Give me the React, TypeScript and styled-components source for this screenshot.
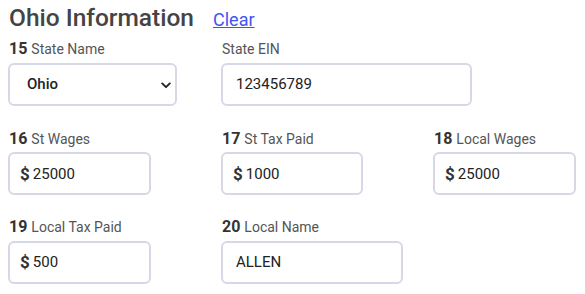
import { createGlobalStyle, styled } from "styled-components";

const GlobalStyle = createGlobalStyle`
	* {
		box-sizing: border-box;
	}
	body {
		margin: 0;
		background: #ffffff;
		font-family: Roboto, "Liberation Sans", Arial, sans-serif;
	}
`;

interface fieldType {
	num?: number;
	label: string;
	value: string;
	width: number;
	money?: boolean;
	select?: boolean;
}

const rows: fieldType[][] = [
	[
		{ num: 15, label: "State Name", value: "Ohio", width: 169, select: true },
		{ label: "State EIN", value: "123456789", width: 251 },
	],
	[
		{ num: 16, label: "St Wages", value: "25000", width: 143, money: true },
		{ num: 17, label: "St Tax Paid", value: "1000", width: 142, money: true },
		{ num: 18, label: "Local Wages", value: "25000", width: 143, money: true },
	],
	[
		{ num: 19, label: "Local Tax Paid", value: "500", width: 143, money: true },
		{ num: 20, label: "Local Name", value: "ALLEN", width: 182 },
	],
];

// space under each row
const rowGaps = [23, 22, 0];

const Chevron = () => (
	<ArrowIcon width="10" height="7" viewBox="0 0 10 7">
		<path
			d="M1.2 1.4 L5 5.2 L8.8 1.4"
			fill="none"
			stroke="#222"
			strokeWidth="1.9"
			strokeLinecap="round"
			strokeLinejoin="round"
		/>
	</ArrowIcon>
);

const App = () => {
	return (
		<>
			<GlobalStyle />
			<Wrapper>
				<Header>
					<h2>Ohio Information</h2>
					<a href="#">Clear</a>
				</Header>
				{rows.map((row, i) => (
					<Row key={i} $gap={rowGaps[i]}>
						{row.map((el) => (
							<Field key={el.label}>
								<Label>
									{el.num && <b>{el.num}</b>}
									<span>{el.label}</span>
								</Label>
								<Box $width={el.width}>
									{el.select ? (
										<>
											<SelectText>{el.value}</SelectText>
											<Chevron />
										</>
									) : (
										<>
											{el.money && <Dollar>$</Dollar>}
											<Input defaultValue={el.value} readOnly $money={el.money} />
										</>
									)}
								</Box>
							</Field>
						))}
					</Row>
				))}
			</Wrapper>
		</>
	);
};

export default App;

const Wrapper = styled.div`
	display: flex;
	flex-direction: column;
	padding: 4px 8px 0 8px;
	width: 585px;
`;

const Header = styled.div`
	display: flex;
	align-items: baseline;
	gap: 19px;
	margin-bottom: 7px;

	h2 {
		margin: 0;
		font-size: 24.5px;
		line-height: 28px;
		font-weight: 500;
		color: #444444;
		padding-left: 1px;
	}

	a {
		font-size: 18px;
		color: #4354f0;
		text-decoration: underline;
	}
`;

const Row = styled.div<{ $gap: number }>`
	display: grid;
	grid-template-columns: 213px 212px auto;
	margin-bottom: ${(props) => props.$gap}px;
`;

const Field = styled.div`
	display: flex;
	flex-direction: column;
`;

const Label = styled.div`
	display: flex;
	align-items: baseline;
	gap: 4px;
	height: 20px;
	line-height: 20px;
	margin-bottom: 3.5px;
	padding-left: 1px;

	b {
		font-size: 16px;
		font-weight: 700;
		color: #333333;
	}

	span {
		font-size: 14px;
		color: #555555;
	}
`;

const Box = styled.div<{ $width: number }>`
	position: relative;
	display: flex;
	align-items: center;
	width: ${(props) => props.$width}px;
	height: 43px;
	border: 2px solid #d7d8e7;
	border-radius: 6px;
	background: #ffffff;
`;

const SelectText = styled.span`
	padding-left: 17px;
	font-size: 15px;
	font-weight: 500;
	color: #222222;
`;

const ArrowIcon = styled.svg`
	position: absolute;
	right: 4px;
	top: 17px;
`;

const Dollar = styled.span`
	padding-left: 10px;
	font-size: 17px;
	font-weight: 700;
	color: #333333;
`;

const Input = styled.input<{ $money?: boolean }>`
	border: none;
	outline: none;
	background: transparent;
	width: 100%;
	padding: 0 0 0 ${(props) => (props.$money ? "3px" : "13px")};
	font-family: Roboto, "Liberation Sans", Arial, sans-serif;
	font-size: 15px;
	font-weight: 400;
	color: #222222;
`;
